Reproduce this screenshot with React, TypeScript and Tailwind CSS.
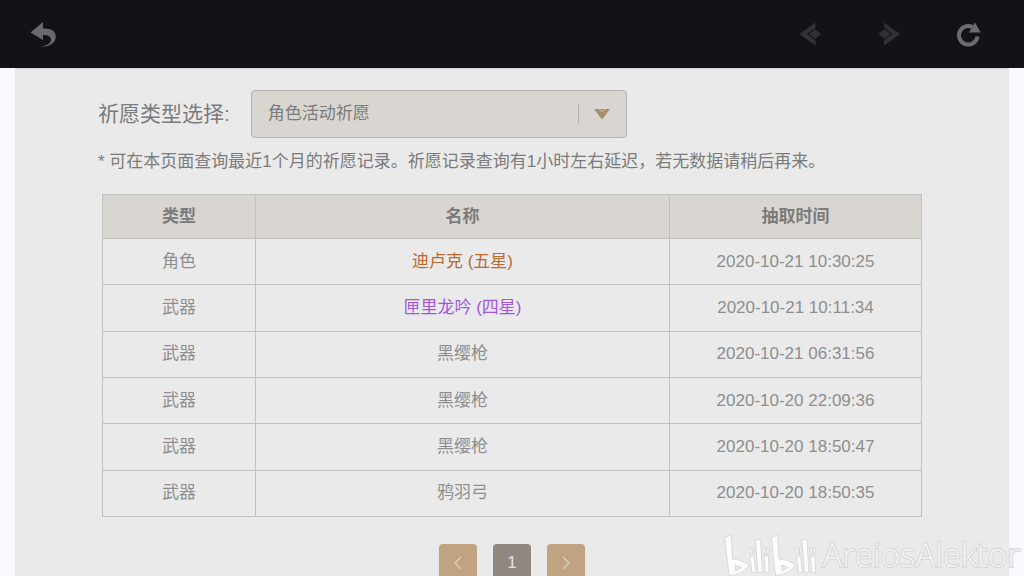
import type { ReactNode } from "react";

type Pull = { type: string; name: string; time: string; tone: string };

const pulls: Pull[] = [
  { type: "角色", name: "迪卢克 (五星)", time: "2020-10-21 10:30:25", tone: "text-[#bd6932]" },
  { type: "武器", name: "匣里龙吟 (四星)", time: "2020-10-21 10:11:34", tone: "text-[#a256e1]" },
  { type: "武器", name: "黑缨枪", time: "2020-10-21 06:31:56", tone: "text-[#8e8e8e]" },
  { type: "武器", name: "黑缨枪", time: "2020-10-20 22:09:36", tone: "text-[#8e8e8e]" },
  { type: "武器", name: "黑缨枪", time: "2020-10-20 18:50:47", tone: "text-[#8e8e8e]" },
  { type: "武器", name: "鸦羽弓", time: "2020-10-20 18:50:35", tone: "text-[#8e8e8e]" },
];

function BarButton({ label, children }: { label: string; children: ReactNode }) {
  return (
    <button type="button" aria-label={label} className="flex size-8 items-center justify-center">
      {children}
    </button>
  );
}

function TopBar() {
  return (
    <header className="flex h-[68px] shrink-0 items-center justify-between bg-[#111317] pr-10 pl-[27px]">
      <BarButton label="返回">
        <svg viewBox="0 0 32 32" className="size-8" fill="#68696b">
          <path d="M3.500 14.500 L16 4 V10.500 C24 10 28.800 13 28.800 18.500 C28.800 25 22 29 14 28.700 C20.500 27.500 24 25 24 21.500 C24 18.300 20.500 17 16 17 V22 Z" />
        </svg>
      </BarButton>
      <nav className="flex items-center gap-[47px]">
        <BarButton label="后退">
          <svg viewBox="0 0 32 32" className="size-8" fill="#303133">
            <path d="M5.500 16 L21.500 4.500 V9.800 L13 16 L21.500 22.200 V27.700 Z" />
            <path d="M21 11.200 L27 16 L21 20.800 L15 16 Z" />
          </svg>
        </BarButton>
        <BarButton label="前进">
          <svg viewBox="0 0 32 32" className="size-8" fill="#303133">
            <path d="M27 16 L11 4.500 V9.800 L19.500 16 L11 22.200 V27.700 Z" />
            <path d="M11.500 11.200 L5.500 16 L11.500 20.800 L17.500 16 Z" />
          </svg>
        </BarButton>
        <BarButton label="刷新">
          <svg viewBox="0 0 32 32" className="size-8">
            <path d="M20.500 9 A9.300 9.300 0 1 0 25.500 18.500" fill="none" stroke="#6b6c6e" strokeWidth="4" />
            <path d="M23 4.500 L28.700 14.500 H17 Z" fill="#6b6c6e" />
          </svg>
        </BarButton>
      </nav>
    </header>
  );
}

function WishTypePicker() {
  return (
    <div className="flex items-center gap-[21px]">
      <label htmlFor="wish-type" className="text-[21px] text-[#7b7b7b]">
        祈愿类型选择:
      </label>
      <div className="relative w-[376px]">
        <select
          id="wish-type"
          className="h-12 w-full appearance-none rounded border border-[#b3b1ae] bg-[#d9d6d1] pl-4 text-[17px] text-[#7b7b7b]"
        >
          <option>角色活动祈愿</option>
        </select>
        <div className="pointer-events-none absolute inset-y-0 right-4 flex items-center gap-[14px]">
          <span className="h-5 w-px bg-[#b8b5b0]" />
          <svg viewBox="0 0 18 12" className="h-3 w-[18px]">
            <path d="M1 1 H17 L9 11.500 Z" fill="#a98d6b" />
            <path d="M6 1 L9 3.500 L12 1" fill="none" stroke="#d9d6d1" strokeWidth="0.800" />
          </svg>
        </div>
      </div>
    </div>
  );
}

function PullTable() {
  const head = "border border-[#c1c1be] font-bold";
  const cell = "border border-[#c1c1be]";
  return (
    <table className="h-[323px] w-full table-fixed border-collapse text-center text-[17px] leading-6 text-[#8e8e8e]">
      <colgroup>
        <col className="w-[153px]" />
        <col />
        <col className="w-[252px]" />
      </colgroup>
      <thead className="bg-[#d9d6d1] text-[#7b7b7b]">
        <tr className="h-11">
          <th className={head}>类型</th>
          <th className={head}>名称</th>
          <th className={head}>抽取时间</th>
        </tr>
      </thead>
      <tbody>
        {pulls.map((p) => (
          <tr key={p.time} className="h-[46px]">
            <td className={cell}>{p.type}</td>
            <td className={cell}>
              <span className={p.tone}>{p.name}</span>
            </td>
            <td className={cell}>{p.time}</td>
          </tr>
        ))}
      </tbody>
    </table>
  );
}

function Pager() {
  const step = "flex size-[38px] items-center justify-center rounded bg-[#c0a482]";
  return (
    <nav aria-label="分页" className="flex justify-center gap-4">
      <button type="button" aria-label="上一页" className={step}>
        <svg viewBox="0 0 16 16" className="size-4" fill="none" stroke="#dccfbe" strokeWidth="1.200">
          <path d="M11 2 L5 8 L11 14" />
        </svg>
      </button>
      <button
        type="button"
        aria-current="page"
        className="flex size-[38px] items-center justify-center rounded bg-[#8f8780] text-[17px] text-[#e4e2e0]"
      >
        1
      </button>
      <button type="button" aria-label="下一页" className={step}>
        <svg viewBox="0 0 16 16" className="size-4" fill="none" stroke="#dccfbe" strokeWidth="1.200">
          <path d="M5 2 L11 8 L5 14" />
        </svg>
      </button>
    </nav>
  );
}

function BiliHalf() {
  return (
    <>
      <path d="M0.800 3.500 L7 1.200 L8.500 25 C15 25.500 22 28 25 31.500 C21 37 13.500 41 5 41.500 Z M11 31 L11.800 37 L17.500 33.500 Z" />
      <path d="M26 22.500 L30 22 L31.800 38 L28 38.500 Z" />
      <path d="M31.500 6 L36.500 5.500 L38.300 38 L34 38.500 Z" />
      <path d="M40 22 L44.500 22 L45 38.500 L41.300 38.500 Z" />
      <path d="M25 14 L27.300 13.500 L28.300 19.500 L26 20 Z M29 14 L31 14 L30.500 19.500 L29 19.500 Z" />
      <path d="M39.300 14 L41.500 13.500 L42 19.500 L40 20 Z M43 14 L45.300 14 L44.800 19.500 L43 19.500 Z" />
    </>
  );
}

function Watermark() {
  return (
    <div className="pointer-events-none absolute right-1 bottom-0 flex h-[42px] items-start gap-1">
      <svg viewBox="0 0 94 42" className="h-[42px] w-[94px]" fill="#fdfdfd" fillRule="evenodd" stroke="#c8c8c8" strokeWidth="0.600">
        <BiliHalf />
        <g transform="translate(46.500 0)">
          <BiliHalf />
        </g>
      </svg>
      <span className="font-['Open_Sans'] text-[33px] leading-[42px] font-light text-[#f4f4f4] [-webkit-text-stroke:2px_#d6d6d6] [paint-order:stroke_fill]">
        AreiosAlektor
      </span>
    </div>
  );
}

export default function App() {
  return (
    <div className="relative flex h-screen flex-col overflow-hidden bg-[#faf9fe] font-['Liberation_Sans','Noto_Sans_CJK_SC',sans-serif]">
      <TopBar />
      <main className="mx-[15px] min-h-0 flex-1 overflow-hidden border-t border-[#d4d4d4] bg-[#eaeaea] px-[83px] pt-[21px]">
        <WishTypePicker />
        <p className="mt-3 text-[17px] leading-6 text-[#7b7b7b]">
          * 可在本页面查询最近1个月的祈愿记录。祈愿记录查询有1小时左右延迟，若无数据请稍后再来。
        </p>
        <section className="mx-1 mt-5">
          <PullTable />
        </section>
        <div className="mt-[27px]">
          <Pager />
        </div>
      </main>
      <Watermark />
    </div>
  );
}
